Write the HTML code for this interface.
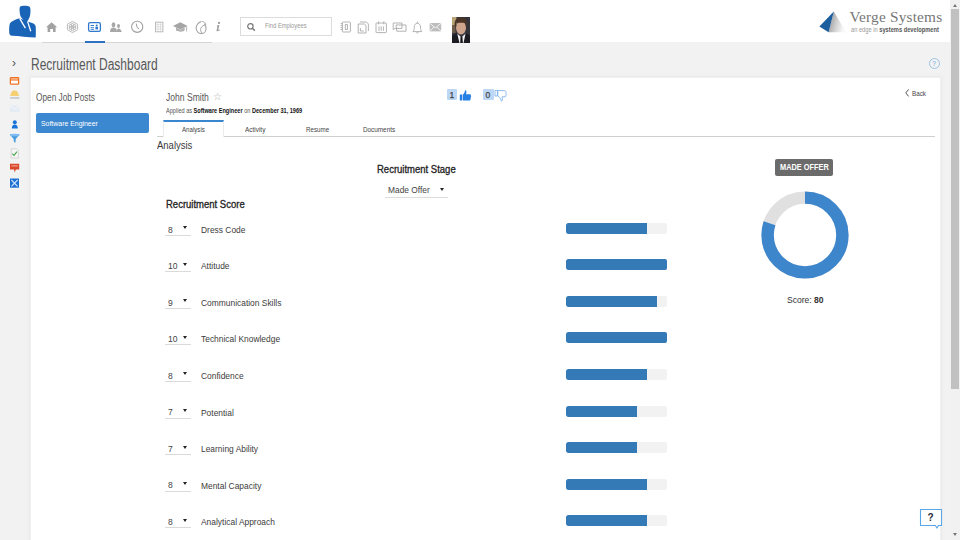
<!DOCTYPE html>
<html><head><meta charset="utf-8"><title>Recruitment Dashboard</title>
<style>
*{margin:0;padding:0;box-sizing:border-box}
html,body{width:960px;height:540px;overflow:hidden}
body{background:#f2f2f2;font-family:"Liberation Sans",sans-serif;color:#333;position:relative}
.a{position:absolute}
#hdr{position:absolute;left:0;top:0;width:950px;height:42px;background:#fff}
.t{position:absolute;white-space:nowrap;transform-origin:0 0;line-height:1}
#panel{position:absolute;left:31px;top:78px;width:909px;height:470px;background:#fff;box-shadow:0 0 0 1px #f0f0f0,0 0 3px 2px #e9e9e9}
#sb{position:absolute;left:950px;top:0;width:10px;height:540px;background:#f1f1f1}
#thumb{position:absolute;left:951px;top:9px;width:8px;height:380px;background:#c1c1c1}
.bar{position:absolute;left:566px;width:101px;height:11px;background:#f2f2f2;border-radius:2px;overflow:hidden}
.bar i{display:block;height:100%;background:#337ab7;border-radius:2px 0 0 2px}
.tri{position:absolute;width:0;height:0;border-left:2px solid transparent;border-right:2px solid transparent;border-top:3px solid #222}
</style></head><body>
<div id="hdr"></div>
<svg class="a" style="left:6px;top:4px" width="34" height="36" viewBox="0 0 34 36">
<path d="M13.4 14.2 C9.5 15.6 5.5 17.2 4 19.2 C3 21.5 3.1 26.5 3.3 29.2 C3.5 30.8 4.4 31.6 6 31.7 C13 32 22 33.2 29.7 33.4 C29.9 29.5 29.9 25.5 29.7 22.6 C29.3 20.8 27.8 19.8 26.2 19.1 L21.4 17.4 Z" fill="#1a64b8"/>
<path d="M13.9 2.8 C15.8 1.5 21.3 1.4 23.6 2.8 C24.8 4.2 24.6 8.8 24 11.8 C23.3 14.6 21.8 17 20.2 18.6 C18.3 17 15.4 14.3 14.4 11.8 C13.5 9 13.3 4.5 13.9 2.8 Z" fill="#1a64b8"/>
<path d="M13.6 14.3 L19.4 24.2" stroke="#fff" stroke-width="1.3"/>
<path d="M21.6 17.6 L24.8 27.2" stroke="#fff" stroke-width="1.3"/>
<path d="M19.4 19.6 L21.2 19.4 L22.6 24.8 L21 25.6 Z" fill="#1a64b8"/>
</svg>
<svg class="a" style="left:40px;top:18px" width="190" height="18" viewBox="0 0 190 18">
<!-- home 46-57, y22-32 -->
<path d="M6 9.2 L11.6 4.2 L17.2 9.2 L15.6 9.2 L15.6 14 L13 14 L13 11 L10.2 11 L10.2 14 L7.6 14 L7.6 9.2 Z" fill="#a2a2a2"/>
<!-- gear hex 67-78 -->
<g fill="none" stroke="#b4b4b4" stroke-width="0.9">
<path d="M32.5 3.4 L37.6 6.2 L37.6 11.8 L32.5 14.6 L27.4 11.8 L27.4 6.2 Z"/>
<circle cx="32.5" cy="6.8" r="1.5"/><circle cx="32.5" cy="11.2" r="1.5"/>
<circle cx="30.6" cy="7.9" r="1.5"/><circle cx="34.4" cy="7.9" r="1.5"/>
<circle cx="30.6" cy="10.1" r="1.5"/><circle cx="34.4" cy="10.1" r="1.5"/>
</g>
<!-- card blue 88-101, y22-32 -->
<rect x="48.6" y="4.6" width="11.8" height="8.8" rx="1.6" fill="none" stroke="#2f78cc" stroke-width="1.3"/>
<rect x="50.6" y="7" width="3.4" height="1" fill="#2f78cc"/><rect x="50.6" y="9.2" width="3.4" height="1" fill="#2f78cc"/><rect x="50.6" y="11" width="3.4" height="0.8" fill="#2f78cc"/>
<circle cx="56.7" cy="7.4" r="1" fill="#2f78cc"/><rect x="55.4" y="8.8" width="2.6" height="2.6" fill="#2f78cc"/>
<!-- people 110-121.7 -->
<g fill="#a8a8a8">
<ellipse cx="73.5" cy="6.8" rx="1.9" ry="2.5"/><path d="M70 14 C70 11 71.5 9.6 73.5 9.6 C75.5 9.6 77 11 77 14 Z"/>
<ellipse cx="78.5" cy="8" rx="1.5" ry="2.1"/><path d="M76.5 14 C76.8 11.5 77.5 10.4 78.6 10.4 C79.8 10.4 81.3 11.6 81.7 14 Z"/>
</g>
<!-- clock 131-143.5, y20.7-33 -->
<circle cx="97.2" cy="8.8" r="5.6" fill="none" stroke="#a0a0a0" stroke-width="1.1"/>
<path d="M96.3 5.6 L97 9.4 L99.2 11" fill="none" stroke="#a0a0a0" stroke-width="1"/>
<!-- calc 155-163.3 y21.7-32 -->
<rect x="115.5" y="4.2" width="7.4" height="9.6" fill="none" stroke="#b8b8b8" stroke-width="1"/>
<path d="M115.5 6.4 H122.9 M115.5 8.7 H122.9 M115.5 11 H122.9 M118 4.2 V13.8 M120.5 4.2 V13.8" stroke="#cfcfcf" stroke-width="0.6"/>
<!-- grad cap 173-187.7 y21.7-32 -->
<path d="M133 8 L140.3 4.2 L147.6 8 L140.3 11.4 Z" fill="#a5a5a5"/>
<path d="M136 9.6 L136 12.6 C138 14.2 142.6 14.2 144.6 12.6 L144.6 9.6 L140.3 11.8 Z" fill="#b0b0b0"/>
<path d="M146.6 8.6 L146.6 13.5" stroke="#a5a5a5" stroke-width="0.8"/>
<!-- pie 195.7-206 y20.3-32 -->
<path d="M161.4 3.6 C158.6 4.2 156.2 7 156.2 10 C156.2 13.4 158.6 15.6 161.2 15.6 C164 15.6 166 13.4 166 10.4 C166 8 165.2 6.6 164.2 5.6" fill="none" stroke="#a8a8a8" stroke-width="1.1"/>
<path d="M162.2 3.4 C164.2 3.8 165.6 5 165.8 6.6 C163.6 7.4 161.6 8.2 160.8 10.2 C160.2 12 161 14 162 15.4" fill="none" stroke="#a8a8a8" stroke-width="1"/>
<!-- i 216-220 y22-30.7 -->
<circle cx="179" cy="4.9" r="1.1" fill="#999"/>
<path d="M177 7.4 L179.4 7 L178.2 12 L179.8 11.6 L179.5 12.8 L176.4 13.2 L177.5 8.4 L176.8 8.4 Z" fill="#999"/>
</svg>
<div class="a" style="left:42px;top:42px;width:170px;height:1px;background:#d6d6d6"></div>
<div class="a" style="left:85px;top:41px;width:20px;height:2px;background:#2d72c2"></div>
<div class="a" style="left:240px;top:17px;width:92px;height:19px;border:1px solid #dcdcdc;background:#fff"></div>
<svg class="a" style="left:246px;top:22px" width="11" height="10" viewBox="0 0 11 10"><circle cx="4.4" cy="4.3" r="2.7" fill="none" stroke="#777" stroke-width="1.2"/><path d="M6.3 6.3 L8.8 8.6" stroke="#777" stroke-width="1.5"/></svg>
<div class="t" style="left:265px;top:22.6px;font-size:6.6px;color:#999;font-weight:normal;transform:scaleX(0.88);">Find Employees</div>
<svg class="a" style="left:336px;top:18px" width="110" height="18" viewBox="0 0 110 18">
<g fill="none" stroke="#aaa" stroke-width="0.9">
<!-- address book 340.4-350.9 y21.7-32 -->
<rect x="6.4" y="4" width="8" height="10" rx="0.8"/>
<path d="M4.6 5.6 H6.4 M4.6 7.6 H6.4 M4.6 9.6 H6.4 M4.6 11.6 H6.4"/>
<path d="M9.3 6.5 H11.4 V11.5 H9.3 Z"/>
<!-- docs 357.8-368.6 y21-33 -->
<path d="M22.2 6 L22.2 15 L30 15 L30 7.6 L28.4 6 Z"/>
<path d="M24 4 L30.5 4 L32.4 6 L32.4 13"/>
<path d="M24.4 10 V13 H27.8"/>
<!-- calendar 375.5-386.4 y21.2-32.6 -->
<rect x="40" y="5" width="10.4" height="9.6" rx="0.6"/>
<path d="M42.6 3.4 V6.4 M47.8 3.4 V6.4 M43 8.4 V12.8 M45.2 8.4 V12.8 M47.4 8.4 V12.8"/>
<!-- chat 392.7-406.1 y22.5-31.7 -->
<path d="M57.2 5 H66 V10.4 H59 L57.2 11.8 Z"/>
<path d="M60 7 H70 V13.2 H60.8 Z"/>
<!-- bell 412.5-422.1 y21.7-32.8 -->
<path d="M77 13.6 C78 12.4 78.3 11 78.3 9.2 C78.3 6.8 79.4 5.4 81.4 5.2 C83.4 5.4 84.5 6.8 84.5 9.2 C84.5 11 84.8 12.4 85.8 13.6 Z"/>
<path d="M81.4 3.6 V5.2 M80.4 14.4 C80.6 15.2 82.2 15.2 82.4 14.4"/>
</g>
<!-- mail 429.4-441.2 y22.9-31.5 -->
<rect x="93.6" y="5" width="11.6" height="8.4" fill="#bdbdbd"/>
<path d="M93.6 5.2 L99.4 9.8 L105.2 5.2 M93.6 13.2 L98 9 M105.2 13.2 L100.8 9" fill="none" stroke="#fff" stroke-width="0.8"/>
</svg>
<svg class="a" style="left:451.5px;top:16.5px" width="18.5" height="26.5" viewBox="0 0 18.5 26.5">
<rect width="18.5" height="26.5" fill="#34343c"/>
<rect x="0" y="0" width="4.5" height="8" fill="#b9a476"/>
<rect x="0" y="8" width="3.5" height="8" fill="#6d5d48"/>
<path d="M2.6 8 C2.4 2.6 5 0.6 9 0.6 C13 0.6 15.6 2.4 15.2 8 L14.4 11 L13.6 5 L4.4 5 L3.6 11 Z" fill="#4a3426"/>
<ellipse cx="9" cy="10.8" rx="5" ry="6.6" fill="#cfa48c"/>
<path d="M4.4 4.6 C6 3 12 2.8 13.8 4.6 L13.8 5.8 L4.4 5.8 Z" fill="#4a3426"/>
<path d="M5.2 16.6 L9.4 20.6 L13.6 16.6 L14.6 26.5 L4.4 26.5 Z" fill="#f2f2f4"/>
<path d="M8.6 19.8 L10.4 19.8 L10.9 26.5 L8.2 26.5 Z" fill="#141416"/>
<path d="M0 26.5 L0 19 C2 17.6 3.6 17 5.2 16.6 L7.6 26.5 Z M18.5 26.5 L18.5 19 C16.6 17.6 15 17 13.6 16.6 L11.4 26.5 Z" fill="#1c1b21"/>
</svg>
<svg class="a" style="left:816px;top:8px" width="34" height="28" viewBox="0 0 34 28">
<defs><linearGradient id="lg" x1="0" y1="0" x2="1" y2="0.3"><stop offset="0" stop-color="#8c8c8c"/><stop offset="0.6" stop-color="#d4d4d4"/><stop offset="1" stop-color="#f8f8f8"/></linearGradient></defs>
<path d="M17.8 3.6 L12.6 24.2 L30 24.2 Z" fill="url(#lg)"/>
<path d="M17.8 3.6 L3.4 18.6 L12.6 24.2 Z" fill="#1d5f9e"/>
</svg>
<div class="t" style="left:849.5px;top:8.5px;font-size:15.3px;color:#777;font-weight:normal;font-family:'Liberation Serif',serif;letter-spacing:0.2px;">Verge Systems</div>
<div class="t" style="left:851px;top:26px;font-size:7px;color:#999;transform:scaleX(0.815)">an edge in <b style="color:#555">systems development</b></div>
<div class="t" style="left:12px;top:57px;font-size:12px;color:#555;font-weight:normal;">&#8250;</div>
<svg class="a" style="left:8px;top:74px" width="14" height="118" viewBox="0 0 14 118">
<!-- orange card y77-84 -->
<rect x="2.4" y="3.6" width="8.2" height="6.4" rx="0.6" fill="none" stroke="#f07324" stroke-width="1.3"/>
<rect x="3" y="4.2" width="7" height="2.6" fill="#f5a26c"/>
<rect x="3" y="7" width="7" height="2.4" fill="#fff"/>
<!-- gold y90.3-98 -->
<path d="M2.4 22 C2.4 18.4 4.3 16.4 6.6 16.4 C8.9 16.4 10.8 18.4 10.8 22 Z" fill="#f6cf72"/>
<rect x="2" y="23.4" width="9.4" height="1.1" fill="#a9b4ba"/>
<!-- faint envelope y105.5-112.2 -->
<rect x="2" y="31.6" width="9.4" height="6.4" rx="0.6" fill="#e4ebf3"/>
<path d="M2 31.8 L6.7 35 L11.4 31.8" fill="none" stroke="#f8fafc" stroke-width="0.8"/>
<!-- person y120-128.3 -->
<circle cx="6.8" cy="48.2" r="2" fill="#1a73d9"/>
<path d="M3.8 54.4 C3.8 51.5 5 50.4 6.8 50.4 C8.6 50.4 9.8 51.5 9.8 54.4 Z" fill="#1a73d9"/>
<!-- funnel y134.3-142.7 -->
<path d="M1.8 60.6 C1.8 59.8 11.6 59.8 11.6 60.6 L7.8 65 L7.4 68.8 L6 68 L5.6 65 Z" fill="#4a9ee0"/>
<ellipse cx="6.7" cy="61" rx="4.8" ry="1.3" fill="#7fbdf0"/>
<!-- doc y148.7-158 -->
<path d="M3.2 74.8 L8.6 74.8 L10.4 76.6 L10.4 84 L3.2 84 Z" fill="#f6f6f6" stroke="#c8c8c8" stroke-width="0.7"/>
<path d="M4.4 79.6 L6 81.4 L9 77.6" fill="none" stroke="#4aa94a" stroke-width="1.1"/>
<!-- red speech y163.6-172.8 -->
<path d="M2 89.8 H11.2 V95.6 H8 L6.4 98.6 L6.2 95.6 H2 Z" fill="#d9482a"/>
<rect x="3.4" y="91.4" width="6.4" height="1" fill="#f6b5a5"/>
<!-- blue X y178.5-187.7 -->
<rect x="2" y="104.5" width="9" height="9.2" fill="#1e6fd0"/>
<path d="M3.4 106 L9.6 112.3 M9.6 106 L3.4 112.3" stroke="#cfe6ff" stroke-width="1.1"/>
</svg>
<div class="t" style="left:31px;top:57.2px;font-size:16px;color:#585858;font-weight:normal;transform:scaleX(0.75);">Recruitment Dashboard</div>
<div class="a" style="left:929px;top:58px;width:11px;height:11px;border:1.2px solid #9cc3e6;border-radius:50%"></div>
<div class="t" style="left:932px;top:60px;font-size:7px;color:#9cc3e6;font-weight:bold;">?</div>
<div id="panel"></div>
<div class="t" style="left:36px;top:91.8px;font-size:11.5px;color:#585858;font-weight:normal;transform:scaleX(0.72);">Open Job Posts</div>
<div class="a" style="left:36px;top:113px;width:113px;height:20px;background:#3c88d0;border-radius:2px"></div>
<div class="t" style="left:41px;top:119.8px;font-size:7.6px;color:#fff;font-weight:normal;transform:scaleX(0.91);">Software Engineer</div>
<div class="t" style="left:166px;top:92px;font-size:11.5px;color:#585858;font-weight:normal;transform:scaleX(0.745);">John Smith</div>
<div class="t" style="left:212.5px;top:91.5px;font-size:10px;color:#a8a8a8;font-weight:normal;">&#9734;</div>
<div class="t" style="left:166px;top:106.5px;font-size:7.5px;color:#555;transform:scaleX(0.744)">Applied as <b style="color:#111">Software Engineer</b> on <b style="color:#111">December 31, 1969</b></div>
<div class="a" style="left:447px;top:89px;width:10px;height:11px;background:#bcd7f5;border-radius:1px"></div>
<div class="t" style="left:449.6px;top:91px;font-size:8.5px;color:#444;font-weight:normal;-webkit-text-stroke:0.25px #444;">1</div>
<svg class="a" style="left:459px;top:89px" width="13" height="13" viewBox="0 0 13 13">
<path d="M0.8 5.6 H3 V11.6 H0.8 Z M3.6 5.8 C5 4.6 5.8 3.4 6 1.2 C7 1 7.6 1.8 7.4 3.4 L7 5.2 H11 C12 5.2 12.2 6.2 11.8 6.8 C12.3 7.4 12.2 8 11.7 8.4 C12 9 11.9 9.6 11.4 9.9 C11.6 10.6 11.2 11.6 10.4 11.6 H4.2 L3.6 11 Z" fill="#2780e3"/>
</svg>
<div class="a" style="left:483px;top:89px;width:10.5px;height:11px;background:#bcd7f5;border-radius:1px"></div>
<div class="t" style="left:485.6px;top:91px;font-size:8.5px;color:#444;font-weight:normal;-webkit-text-stroke:0.25px #444;">0</div>
<svg class="a" style="left:494px;top:89px" width="14" height="13" viewBox="0 0 14 13">
<path d="M1 1.4 H3.4 V7 H1 Z M3.8 1.6 H10.6 C11.6 1.6 12.2 2.6 11.8 3.2 C12.4 3.6 12.4 4.4 11.9 4.8 C12.4 5.2 12.4 6 11.8 6.4 C12.4 7 11.9 7.8 11 7.8 H8 L8.4 10 C8.6 11.6 8 12.2 7.2 12 C6.8 9.8 6 8.6 3.8 7 Z" fill="#fff" stroke="#7fb3ec" stroke-width="0.9"/>
</svg>
<svg class="a" style="left:904px;top:88px" width="6" height="10" viewBox="0 0 6 10"><path d="M4.6 1.4 L1.8 4.9 L4.6 8.4" fill="none" stroke="#555" stroke-width="1"/></svg>
<div class="t" style="left:911.5px;top:90px;font-size:7px;color:#444;font-weight:normal;transform:scaleX(0.9);">Back</div>
<div class="a" style="left:157px;top:136px;width:778px;height:1px;background:#cfcfcf"></div>
<div class="a" style="left:163px;top:120px;width:61px;height:17px;background:#fff;border:1px solid #ececec;border-top:2px solid #3a87d0;border-bottom:none"></div>
<div class="t" style="left:182px;top:126px;font-size:7.3px;color:#444;font-weight:normal;transform:scaleX(0.84);">Analysis</div>
<div class="t" style="left:245px;top:126px;font-size:7.3px;color:#444;font-weight:normal;transform:scaleX(0.88);">Activity</div>
<div class="t" style="left:306px;top:126px;font-size:7.3px;color:#444;font-weight:normal;transform:scaleX(0.85);">Resume</div>
<div class="t" style="left:363px;top:126px;font-size:7.3px;color:#444;font-weight:normal;transform:scaleX(0.87);">Documents</div>
<div class="t" style="left:157px;top:140.5px;font-size:10px;color:#3a3a3a;font-weight:normal;transform:scaleX(0.95);">Analysis</div>
<div class="t" style="left:377px;top:164.8px;font-size:10px;color:#222;font-weight:normal;transform:scaleX(0.95);-webkit-text-stroke:0.3px #222;">Recruitment Stage</div>
<div class="t" style="left:388px;top:185.5px;font-size:9px;color:#444;font-weight:normal;transform:scaleX(0.93);">Made Offer</div>
<div class="tri" style="left:440px;top:188px"></div>
<div class="a" style="left:385px;top:197px;width:63px;height:1px;background:#ddd"></div>
<div class="t" style="left:165.5px;top:199.8px;font-size:10px;color:#222;font-weight:normal;transform:scaleX(0.95);-webkit-text-stroke:0.3px #222;">Recruitment Score</div>
<div class="a" style="left:775px;top:159px;width:58px;height:17px;background:#6b6b6b;border-radius:2px"></div>
<div class="t" style="left:780.3px;top:161.8px;font-size:9.5px;color:#fff;font-weight:bold;transform:scaleX(0.776);">MADE OFFER</div>
<svg class="a" style="left:755px;top:185px" width="100" height="100" viewBox="0 0 100 100">
<circle cx="50" cy="50" r="37.4" fill="none" stroke="#e0e0e0" stroke-width="12.4"/>
<circle cx="50" cy="50" r="37.4" fill="none" stroke="#3d86cc" stroke-width="12.4" stroke-dasharray="188 400" transform="rotate(-90 50 50)"/>
</svg>
<div class="t" style="left:787px;top:294.5px;font-size:9.5px;color:#333;transform:scaleX(0.9)">Score: <b>80</b></div>
<div class="t" style="left:168px;top:225.7px;font-size:9px;color:#444;font-weight:normal;transform:scaleX(0.95);">8</div>
<div class="tri" style="left:182.5px;top:226.30px"></div>
<div class="a" style="left:165px;top:234.80px;width:26px;height:1px;background:#dadada"></div>
<div class="t" style="left:201px;top:225.79999999999998px;font-size:9px;color:#3c3c3c;font-weight:normal;transform:scaleX(0.935);">Dress Code</div>
<div class="bar" style="top:222.80px"><i style="width:80%"></i></div>
<div class="t" style="left:168px;top:262.24px;font-size:9px;color:#444;font-weight:normal;transform:scaleX(0.95);">10</div>
<div class="tri" style="left:182.5px;top:262.84px"></div>
<div class="a" style="left:165px;top:271.34px;width:26px;height:1px;background:#dadada"></div>
<div class="t" style="left:201px;top:262.34px;font-size:9px;color:#3c3c3c;font-weight:normal;transform:scaleX(0.935);">Attitude</div>
<div class="bar" style="top:259.34px"><i style="width:100%"></i></div>
<div class="t" style="left:168px;top:298.78000000000003px;font-size:9px;color:#444;font-weight:normal;transform:scaleX(0.95);">9</div>
<div class="tri" style="left:182.5px;top:299.38px"></div>
<div class="a" style="left:165px;top:307.88px;width:26px;height:1px;background:#dadada"></div>
<div class="t" style="left:201px;top:298.88px;font-size:9px;color:#3c3c3c;font-weight:normal;transform:scaleX(0.935);">Communication Skills</div>
<div class="bar" style="top:295.88px"><i style="width:90%"></i></div>
<div class="t" style="left:168px;top:335.32000000000005px;font-size:9px;color:#444;font-weight:normal;transform:scaleX(0.95);">10</div>
<div class="tri" style="left:182.5px;top:335.92px"></div>
<div class="a" style="left:165px;top:344.42px;width:26px;height:1px;background:#dadada"></div>
<div class="t" style="left:201px;top:335.42px;font-size:9px;color:#3c3c3c;font-weight:normal;transform:scaleX(0.935);">Technical Knowledge</div>
<div class="bar" style="top:332.42px"><i style="width:100%"></i></div>
<div class="t" style="left:168px;top:371.86px;font-size:9px;color:#444;font-weight:normal;transform:scaleX(0.95);">8</div>
<div class="tri" style="left:182.5px;top:372.46px"></div>
<div class="a" style="left:165px;top:380.96px;width:26px;height:1px;background:#dadada"></div>
<div class="t" style="left:201px;top:371.96px;font-size:9px;color:#3c3c3c;font-weight:normal;transform:scaleX(0.935);">Confidence</div>
<div class="bar" style="top:368.96px"><i style="width:80%"></i></div>
<div class="t" style="left:168px;top:408.4px;font-size:9px;color:#444;font-weight:normal;transform:scaleX(0.95);">7</div>
<div class="tri" style="left:182.5px;top:409.00px"></div>
<div class="a" style="left:165px;top:417.50px;width:26px;height:1px;background:#dadada"></div>
<div class="t" style="left:201px;top:408.49999999999994px;font-size:9px;color:#3c3c3c;font-weight:normal;transform:scaleX(0.935);">Potential</div>
<div class="bar" style="top:405.50px"><i style="width:70%"></i></div>
<div class="t" style="left:168px;top:444.94000000000005px;font-size:9px;color:#444;font-weight:normal;transform:scaleX(0.95);">7</div>
<div class="tri" style="left:182.5px;top:445.54px"></div>
<div class="a" style="left:165px;top:454.04px;width:26px;height:1px;background:#dadada"></div>
<div class="t" style="left:201px;top:445.04px;font-size:9px;color:#3c3c3c;font-weight:normal;transform:scaleX(0.935);">Learning Ability</div>
<div class="bar" style="top:442.04px"><i style="width:70%"></i></div>
<div class="t" style="left:168px;top:481.48px;font-size:9px;color:#444;font-weight:normal;transform:scaleX(0.95);">8</div>
<div class="tri" style="left:182.5px;top:482.08px"></div>
<div class="a" style="left:165px;top:490.58px;width:26px;height:1px;background:#dadada"></div>
<div class="t" style="left:201px;top:481.58px;font-size:9px;color:#3c3c3c;font-weight:normal;transform:scaleX(0.935);">Mental Capacity</div>
<div class="bar" style="top:478.58px"><i style="width:80%"></i></div>
<div class="t" style="left:168px;top:518.02px;font-size:9px;color:#444;font-weight:normal;transform:scaleX(0.95);">8</div>
<div class="tri" style="left:182.5px;top:518.62px"></div>
<div class="a" style="left:165px;top:527.12px;width:26px;height:1px;background:#dadada"></div>
<div class="t" style="left:201px;top:518.12px;font-size:9px;color:#3c3c3c;font-weight:normal;transform:scaleX(0.935);">Analytical Approach</div>
<div class="bar" style="top:515.12px"><i style="width:80%"></i></div>
<svg class="a" style="left:919px;top:508px" width="25" height="22" viewBox="0 0 25 22">
<path d="M1.5 1.5 H22.5 V17.5 H19.5 L18 20 L16.5 17.5 H1.5 Z" fill="#fff" stroke="#5aa6ea" stroke-width="1.1"/>
</svg>
<div class="t" style="left:927.5px;top:513px;font-size:10px;color:#2a2a35;font-weight:bold;">?</div>
<div id="sb"></div><div id="thumb"></div>
<div class="tri" style="left:953px;top:4px;border-top:none;border-bottom:3px solid #777"></div>
<div class="tri" style="left:953px;top:533px;border-top:3px solid #777"></div>
</body></html>
